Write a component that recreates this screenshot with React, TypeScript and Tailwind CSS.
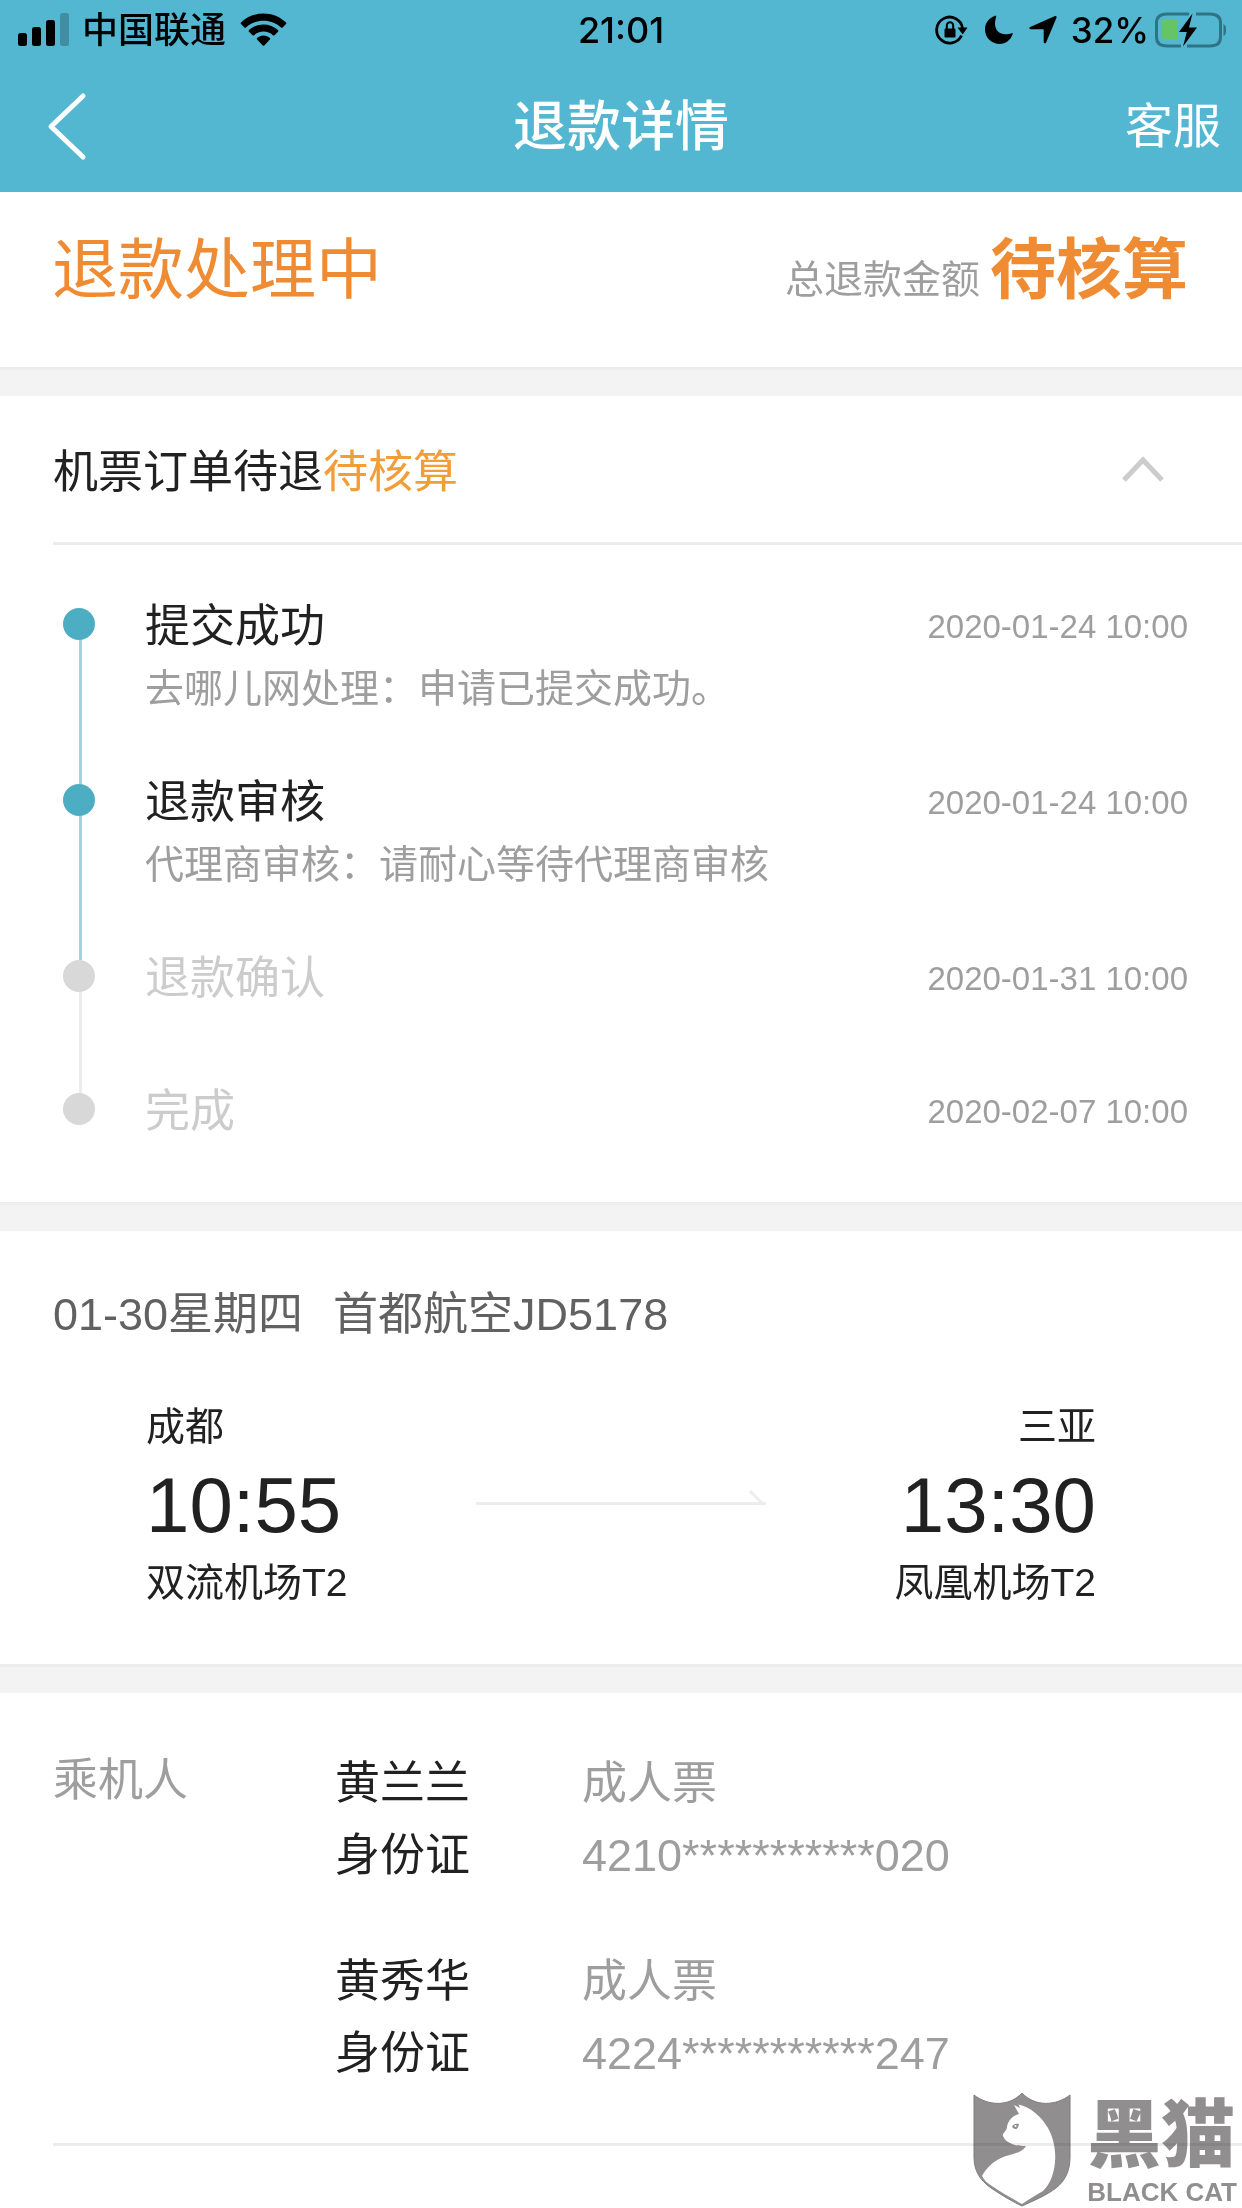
import React from 'react';

interface Step {
  title: string;
  detail?: string;
  time: string;
  done: boolean;
}

interface Passenger {
  name: string;
  ticket: string;
  idType: string;
  idNumber: string;
}

const STEPS: Step[] = [
  { title: '提交成功', detail: '去哪儿网处理：申请已提交成功。', time: '2020-01-24 10:00', done: true },
  { title: '退款审核', detail: '代理商审核：请耐心等待代理商审核', time: '2020-01-24 10:00', done: true },
  { title: '退款确认', time: '2020-01-31 10:00', done: false },
  { title: '完成', time: '2020-02-07 10:00', done: false }
];

const PASSENGERS: Passenger[] = [
  { name: '黄兰兰', ticket: '成人票', idType: '身份证', idNumber: '4210***********020' },
  { name: '黄秀华', ticket: '成人票', idType: '身份证', idNumber: '4224***********247' }
];

const StatusBar: React.FC = () => (
  <div className="grid h-[60px] grid-cols-[1fr_auto_1fr] items-center px-4 font-['Inter','Noto_Sans_CJK_SC',sans-serif] text-[35px] font-medium leading-[58px] text-black">
    <div className="flex items-center">
      <svg width="54" height="34" viewBox="0 0 54 34" aria-label="信号">
        <rect x="2" y="20" width="9" height="13" rx="2.5" />
        <rect x="16" y="14" width="9" height="19" rx="2.5" />
        <rect x="30" y="7" width="9" height="26" rx="2.5" />
        <rect x="44" y="0" width="9" height="33" rx="2.5" opacity="0.22" />
      </svg>
      <span className="ml-3 text-[36px]">中国联通</span>
      <svg className="ml-[14px]" width="47" height="34" viewBox="0 0 47 34" aria-label="Wi-Fi">
        <path d="M23.5 0.5C32 0.5 40 3.8 46 9.4c.5.5.5 1.100 0 1.600L42.600 14.400c-.5.5-1.100.5-1.600 0C36.300 10.100 30.200 7.700 23.500 7.700S10.700 10.100 6 14.400c-.5.5-1.100.5-1.600 0L1 11c-.5-.5-.5-1.100 0-1.600C7 3.800 15 .5 23.500.5Z" />
        <path d="M23.500 11.500c5.500 0 10.600 2 14.500 5.600.5.500.5 1.100 0 1.600l-3.500 3.500c-.5.5-1.100.5-1.600 0-2.500-2.300-5.800-3.600-9.400-3.600s-6.900 1.300-9.400 3.600c-.5.5-1.100.5-1.600 0L9 18.700c-.5-.5-.5-1.100 0-1.600 3.900-3.600 9-5.600 14.500-5.600Z" />
        <path d="M23.500 22.500c2.500 0 4.700.9 6.400 2.400.5.500.5 1.100 0 1.600l-5.600 5.900c-.5.5-1.100.5-1.600 0l-5.600-5.900c-.5-.5-.5-1.100 0-1.600 1.700-1.500 3.900-2.400 6.400-2.400Z" />
      </svg>
    </div>
    <time className="text-[36px]">21:01</time>
    <div className="flex items-center justify-end">
      <svg width="34" height="32" viewBox="0 0 34 32" aria-label="方向锁定">
        <path d="M26.500 21.500A13 13 0 1 1 27.500 14" fill="none" stroke="#000" strokeWidth="2.800" />
        <path d="M22.500 13.500h10l-4.800 7z" />
        <rect x="9.500" y="14.500" width="11" height="9" rx="1.200" />
        <path d="M11.800 15v-3.500a3.200 3.200 0 0 1 6.400 0V15" fill="none" stroke="#000" strokeWidth="2" />
      </svg>
      <svg className="ml-4" width="28" height="30" viewBox="0 0 28 30" aria-label="勿扰模式">
        <path d="M10 .8C11 .3 11.500 1 11.200 2 10.500 4 10 6.200 10 8.400c0 7 4.800 10.800 10.500 10.800 2.200 0 4.300-.4 6-1 .9-.3 1.400.2 1.100 1.100C25.600 25 20.800 29 14.800 29 6.500 29 0 22.800 0 14.300 0 8 4 3 10 .8Z" />
      </svg>
      <svg className="ml-4" width="28" height="28" viewBox="0 0 28 28" aria-label="定位">
        <path d="M25.500.3c1.600-.7 2.500.3 1.900 1.800L17 26.700c-.5 1.200-2.300 1-2.300-.4V13.800c0-.4-.2-.6-.6-.6H1.600c-1.500 0-1.800-1.700-.4-2.300Z" />
      </svg>
      <span className="ml-[14px]">32%</span>
      <svg className="ml-1.5" width="71" height="36" viewBox="0 0 71 36" aria-label="正在充电">
        <path d="M34 2H12C5 2 1.500 5 1.500 11v14c0 6 3.500 9 10.500 9h14M41 2h14c7 0 10.500 3 10.500 9v14c0 6-3.500 9-10.500 9H32" fill="none" stroke="#2f7384" strokeWidth="3" />
        <path d="M68.500 12c3.500 1.500 3.500 10.500 0 12z" fill="#2f7384" />
        <path d="M11 7h12v15h-1l1 1-1 5H11c-3 0-4.500-1.500-4.500-4.500v-12C6.500 8.500 8 7 11 7Z" fill="#65c466" />
        <path d="M37.500 1.500 24 20h7.800L28 34.500 42 15.500h-8z" />
      </svg>
    </div>
  </div>
);

const NavBar: React.FC = () => (
  <nav className="grid h-[132px] grid-cols-[1fr_auto_1fr] items-center px-[21px] text-white">
    <button type="button" aria-label="返回" className="ml-[22px] justify-self-start">
      <svg width="44" height="70" viewBox="0 0 44 70" fill="none" stroke="currentColor" strokeWidth="5" strokeLinecap="round" strokeLinejoin="round">
        <path d="M40 5 8 35.500 40 66" />
      </svg>
    </button>
    <h1 className="pt-0.5 text-[54px] font-medium leading-[72px]">退款详情</h1>
    <button type="button" className="justify-self-end pt-0.5 text-[48px] leading-[72px]">客服</button>
  </nav>
);

const Band: React.FC = () => <div className="h-[29px] border-t-[3px] border-[#ededed] bg-[#f3f3f3]"></div>;

const StepRow: React.FC<{ step: Step; isLast: boolean }> = ({ step, isLast }) => (
  <li className="flex">
    <div className="flex w-8 shrink-0 flex-col pt-[15px]">
      <span className={`h-8 w-8 rounded-full ${step.done ? 'bg-[#4dadc3]' : 'bg-[#d8d8d8]'}`}></span>
      {!isLast && <span className={`-mb-[15px] ml-4 w-[3px] flex-1 ${step.done ? 'bg-[#9fd3dd]' : 'bg-[#ededed]'}`}></span>}
    </div>
    <div className={`ml-[50px] flex-1 pt-0.5 ${step.detail ? 'pb-[50px]' : isLast ? 'pb-[58px]' : 'pb-[67px]'}`}>
      <div className="flex items-center justify-between leading-[64px]">
        <h3 className={`text-[45px] ${step.done ? 'text-[#212121]' : 'text-[#ccc]'}`}>{step.title}</h3>
        <time className="text-[33px] text-[#9e9e9e]">{step.time}</time>
      </div>
      {step.detail && <p className="text-[39px] leading-[60px] text-[#9e9e9e]">{step.detail}</p>}
    </div>
  </li>
);

const Watermark: React.FC = () => (
  <div className="pointer-events-none absolute bottom-0 right-[5px] flex items-end gap-4 text-[#918e8f] mix-blend-multiply">
    <svg width="98" height="116" viewBox="0 0 98 116" aria-hidden="true">
      <path
        fill="currentColor"
        stroke="#7d7b7b"
        strokeWidth="1"
        d="M1 3C15 14 36 15 49 1 62 15 83 14 97 3v62c0 14-5 24-14 31-9 7-23 13-34 18-11-5-22-12-31-18C7 88 1 79 1 65Z"
      />
      <path
        fill="#fff"
        d="M41 13 47 16 45.500 12.500C57 15 68 24 75 36c6 11 8 23 7 34-1 12-5 22-12 29-7 4-14 8-21 13-11-6-21-12-30-18-5-3-8-6-10-10 5-9 11-14 19-18 9-4 20-4 25-12-5 0-10 0-14-2-5-2-8-5-9-8-1-3 4-5 4-9 1-6 5-11 12-13Z"
      />
      <path fill="currentColor" d="M39 35c1-3 4-4 7-3-1 5-3 6-6 4Z" />
      <circle cx="42.500" cy="34" r="1" fill="#fff" />
    </svg>
    <div className="pb-0.5">
      <p className="text-[74px] font-black leading-[84px]">黑猫</p>
      <p className="text-[26px] font-bold leading-[28px]">BLACK CAT</p>
    </div>
  </div>
);

const App: React.FC = () => {
  return (
    <div className="relative min-h-screen bg-white font-['Liberation_Sans','Noto_Sans_CJK_SC',sans-serif] text-[#212121]">
      <header className="bg-[#54b7d1]">
        <StatusBar />
        <NavBar />
      </header>

      <main>
        <section className="flex items-baseline justify-between pb-[55px] pl-[52px] pr-[54px] pt-9 text-[#ef8b33]">
          <h2 className="text-[66px] leading-[84px]">退款处理中</h2>
          <p className="flex items-baseline gap-[10px]">
            <span className="text-[39px] text-[#9e9e9e]">总退款金额</span>
            <strong className="text-[66px] font-bold leading-[84px]">待核算</strong>
          </p>
        </section>
        <Band />

        <section>
          <div className="ml-[53px] flex h-[149px] items-center justify-between border-b-[3px] border-[#ededed] pr-[76px]">
            <h2 className="pt-[7px] text-[45px] leading-[64px]">
              机票订单待退<span className="text-[#f29e38]">待核算</span>
            </h2>
            <button type="button" aria-label="收起" aria-expanded="true">
              <svg width="46" height="28" viewBox="0 0 46 28" fill="none" stroke="#ccc" strokeWidth="5">
                <path d="M4 25 23 5l19 20" />
              </svg>
            </button>
          </div>
          <ol className="pl-[63px] pr-[54px] pt-12">
            {STEPS.map((step, index) => (
              <StepRow key={step.title} step={step} isLast={index === STEPS.length - 1} />
            ))}
          </ol>
        </section>
        <Band />

        <section className="pb-[53px] pl-[53px] pr-[146px] pt-[54px]">
          <h2 className="flex gap-[30px] text-[45px] leading-[60px] text-[#616161]">
            <span>01-30星期四</span>
            <span>首都航空JD5178</span>
          </h2>
          <div className="mt-[54px] flex items-center justify-between pl-[93px] text-[39px] leading-[56px]">
            <div className="flex-1">
              <p>成都</p>
              <p className="text-[78px] leading-[100px]">10:55</p>
              <p>双流机场T2</p>
            </div>
            <svg className="shrink-0" width="290" height="32" viewBox="0 0 290 32" fill="none" stroke="#ededed" strokeWidth="3" aria-hidden="true">
              <path d="M0 14.500h290M274 2l12 12" />
            </svg>
            <div className="flex-1 text-right">
              <p>三亚</p>
              <p className="text-[78px] leading-[100px]">13:30</p>
              <p>凤凰机场T2</p>
            </div>
          </div>
        </section>
        <Band />

        <section className="ml-[53px] flex border-b-[3px] border-[#ededed] pb-[53px] pt-[55px] text-[45px] leading-[72px]">
          <h2 className="w-[282px] shrink-0 leading-[66px] text-[#9e9e9e]">乘机人</h2>
          <ul className="flex flex-1 flex-col gap-[54px]">
            {PASSENGERS.map((passenger) => (
              <li key={passenger.name} className="grid grid-cols-[247px_1fr]">
                <span>{passenger.name}</span>
                <span className="text-[#9e9e9e]">{passenger.ticket}</span>
                <span>{passenger.idType}</span>
                <span className="text-[#9e9e9e]">{passenger.idNumber}</span>
              </li>
            ))}
          </ul>
        </section>
      </main>

      <Watermark />
    </div>
  );
};

export default App;
